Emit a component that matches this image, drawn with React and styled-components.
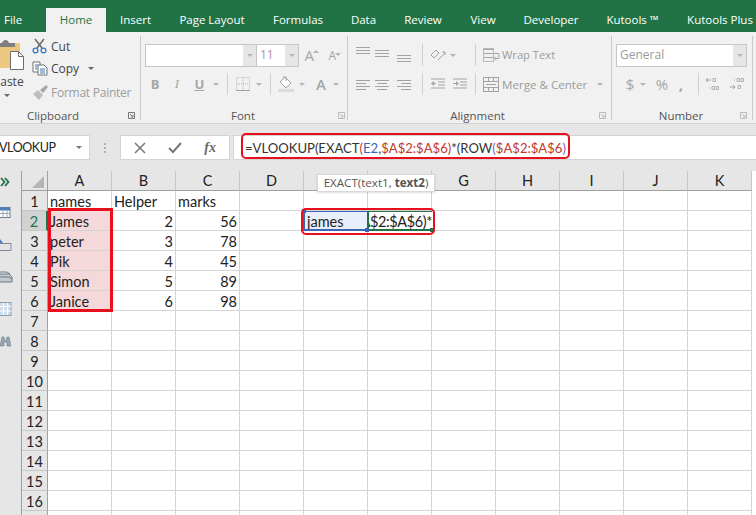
import React from 'react'
import styled, { createGlobalStyle } from 'styled-components'

const uiFont = `"Open Sans", "Noto Sans", sans-serif`
const cellFont = `Lato, "Open Sans", sans-serif`
const muted = '#a6a6a6'

const GlobalStyle = createGlobalStyle`
    html, body {
        margin: 0;
        padding: 0;
        overflow: hidden;
        background: #fff;
    }
`

const Window = styled.div`
    width: 756px;
    height: 515px;
    overflow: hidden;
    display: flex;
    flex-direction: column;
    font-family: ${uiFont};
`

const TabBar = styled.div`
    height: 32px;
    flex: none;
    background: #217346;
    display: flex;
    align-items: flex-end;
    white-space: nowrap;
`

const FileTab = styled.div`
    width: 46px;
    height: 24px;
    flex: none;
    padding-left: 4px;
    box-sizing: border-box;
    color: #fff;
    font-size: 11.5px;
    line-height: 24px;
`

const Tab = styled.div`
    height: 24px;
    width: ${p => p.$w}px;
    flex: none;
    text-align: center;
    font-size: 11.5px;
    line-height: 24px;
    color: ${p => (p.$active ? '#217346' : '#fff')};
    background: ${p => (p.$active ? '#f1f1f1' : 'transparent')};
`

const Ribbon = styled.div`
    height: 92px;
    flex: none;
    background: #f1f1f1;
    border-bottom: 1px solid #d4d4d4;
    box-sizing: border-box;
    display: flex;
    overflow: hidden;
    padding-top: 4px;
`

const Group = styled.div`
    width: ${p => p.$w}px;
    height: 84px;
    flex: none;
    box-sizing: border-box;
    border-right: 1px solid #c9c9c9;
    position: relative;
    display: flex;
    flex-direction: column;
`

const GroupBody = styled.div`
    height: 71px;
    flex: none;
    display: flex;
    flex-direction: column;
    padding-top: ${p => p.$top ?? 7}px;
    box-sizing: border-box;
`

const RibbonRow = styled.div`
    display: flex;
    align-items: center;
    height: ${p => p.$h}px;
    margin-top: ${p => p.$mt ?? 0}px;
    padding-left: ${p => p.$pl ?? 0}px;
    gap: ${p => p.$gap ?? 0}px;
    white-space: nowrap;
`

const GroupLabel = styled.div`
    height: 13px;
    text-align: center;
    font-size: 11.5px;
    line-height: 18px;
    color: #555;
    padding-right: ${p => p.$pr ?? 0}px;
`

const Launcher = styled.svg`
    position: absolute;
    right: ${p => p.$right ?? 5}px;
    bottom: 1px;
    width: 7px;
    height: 7px;
`

const Spot = styled.span`
    width: ${p => p.$w}px;
    flex: none;
    display: flex;
    align-items: center;
    justify-content: ${p => p.$justify ?? 'center'};
    font-size: ${p => p.$size ?? 12}px;
    font-weight: ${p => p.$weight ?? 400};
    font-style: ${p => (p.$italic ? 'italic' : 'normal')};
    text-decoration: ${p => (p.$under ? 'underline' : 'none')};
    margin-left: ${p => p.$ml ?? 0}px;
    color: ${p => p.$color ?? muted};
    font-family: ${p => (p.$serif ? '"Liberation Serif", serif' : uiFont)};
`

const PasteColumn = styled.div`
    width: 32px;
    height: 68px;
    flex: none;
    display: flex;
    flex-direction: column;
    align-items: flex-start;
    overflow: hidden;
`

const PasteLabel = styled.span`
    font-size: 12px;
    line-height: 16px;
    color: #444;
    margin: 4px 0 0 -7px;
`

const RibbonText = styled.span`
    font-size: ${p => p.$size ?? 12}px;
    letter-spacing: ${p => p.$track ?? 0}px;
    margin-left: ${p => p.$ml ?? 0}px;
    margin-top: ${p => p.$lift ? -p.$lift : 0}px;
    color: ${p => p.$color ?? '#444'};
`

const Caret = styled.span`
    width: 0;
    height: 0;
    flex: none;
    border-left: 3px solid transparent;
    border-right: 3px solid transparent;
    border-top: ${p => (p.$up ? '0' : `3px solid ${p.$color ?? '#b5b5b5'}`)};
    border-bottom: ${p => (p.$up ? `3px solid ${p.$color ?? '#b5b5b5'}` : '0')};
    margin-left: ${p => p.$ml ?? 0}px;
    margin-top: ${p => p.$mt ?? 0}px;
    align-self: ${p => (p.$mt ? 'flex-start' : 'center')};
`

const RibbonSep = styled.span`
    width: 1px;
    height: 22px;
    flex: none;
    background: #cfcfcf;
    margin: 0 ${p => p.$right ?? 8}px 0 ${p => p.$left ?? 8}px;
`

const ComboBox = styled.div`
    width: ${p => p.$w}px;
    height: 23px;
    flex: none;
    box-sizing: border-box;
    background: #fff;
    display: flex;
    align-items: center;
    border: 1px solid #c6c6c6;
    border-left-width: ${p => (p.$joined ? 0 : 1)}px;
    font-size: 12px;
    color: ${muted};
`

const ComboText = styled.span`
    flex: 1;
    padding: 0 0 2px 3px;
    color: ${p => p.$color ?? '#9a9a9a'};
`

const ComboArrow = styled.span`
    width: 13px;
    height: 100%;
    background: #e6e6e6;
    display: flex;
    align-items: center;
    justify-content: center;
`

const FormulaArea = styled.div`
    height: 47px;
    flex: none;
    background: #e6e6e6;
    position: relative;
    display: flex;
    padding-top: 11px;
    box-sizing: border-box;
`

const NameBox = styled.div`
    width: 90px;
    height: 25px;
    flex: none;
    box-sizing: border-box;
    background: #fff;
    border: 1px solid #d4d4d4;
    border-left: 0;
    display: flex;
    align-items: center;
    justify-content: space-between;
    padding-right: 7px;
    overflow: hidden;
    font-family: ${cellFont};
    font-size: 12.5px;
    letter-spacing: -0.4px;
    color: #222;
`

const NameText = styled.span`
    margin-left: -1px;
`

const GripDots = styled.div`
    width: 30px;
    flex: none;
    display: flex;
    flex-direction: column;
    align-items: center;
    justify-content: center;
    gap: 2px;
    height: 25px;
`

const GripDot = styled.span`
    width: 2px;
    height: 2px;
    background: #b0b0b0;
`

const FormulaButtons = styled.div`
    width: 110px;
    height: 25px;
    flex: none;
    box-sizing: border-box;
    background: #fff;
    border: 1px solid #d4d4d4;
    display: flex;
    align-items: center;
    justify-content: space-around;
    padding: 0 2px;
`

const FxLabel = styled.span`
    font-family: "Liberation Serif", serif;
    font-style: italic;
    font-weight: 700;
    font-size: 14px;
    color: #6a6a6a;
`

const FormulaInput = styled.div`
    flex: 1;
    height: 25px;
    margin-left: 3px;
    box-sizing: border-box;
    background: #fff;
    border: 1px solid #d4d4d4;
    border-right: 0;
    padding-left: 11px;
    font-family: ${cellFont};
    font-size: 13.1px;
    line-height: 24px;
    color: #333;
    white-space: nowrap;
`

const Ref = styled.span`
    color: ${p => p.$color};
`

const RedOutline = styled.div`
    position: absolute;
    left: ${p => p.$x}px;
    top: ${p => p.$y}px;
    width: ${p => p.$w}px;
    height: ${p => p.$h}px;
    box-sizing: border-box;
    border: ${p => p.$thick ?? 2}px solid #e8101c;
    border-radius: ${p => p.$radius ?? 0}px;
    pointer-events: none;
    z-index: 4;
`

const Sheet = styled.div`
    flex: 1;
    display: flex;
    position: relative;
    overflow: hidden;
    min-height: 0;
`

const SideStrip = styled.div`
    width: 22px;
    flex: none;
    box-sizing: border-box;
    background: #e6e6e6;
    border-right: 1px solid #9f9f9f;
    display: flex;
    flex-direction: column;
    align-items: flex-start;
    overflow: hidden;
`

const SideIcon = styled.div`
    height: 20px;
    margin-top: ${p => p.$mt}px;
    display: flex;
    align-items: center;
`

const Grid = styled.div`
    display: grid;
    grid-template-columns: 26px repeat(11, 64px);
    grid-auto-rows: 20px;
    font-family: ${cellFont};
    font-size: 14.5px;
    color: #222;
`

const Corner = styled.div`
    background: #e6e6e6;
    border-right: 1px solid #9f9f9f;
    border-bottom: 1px solid #9f9f9f;
    box-sizing: border-box;
    position: relative;
`

const CornerMark = styled.span`
    position: absolute;
    right: 3px;
    bottom: 2px;
    width: 0;
    height: 0;
    border-left: 12px solid transparent;
    border-bottom: 12px solid #b4b4b4;
`

const ColHead = styled.div`
    background: #e6e6e6;
    border-right: 1px solid #c8c8c8;
    border-bottom: 1px solid #9f9f9f;
    box-sizing: border-box;
    text-align: center;
    line-height: 19px;
`

const RowHead = styled.div`
    background: ${p => (p.$active ? '#d2d2d2' : '#e6e6e6')};
    color: ${p => (p.$active ? '#217346' : '#222')};
    border-right: ${p => (p.$active ? '2px solid #217346' : '1px solid #9f9f9f')};
    border-bottom: 1px solid #c8c8c8;
    box-sizing: border-box;
    text-align: center;
    line-height: 21px;
`

const Cell = styled.div`
    border-right: 1px solid #d4d4d4;
    border-bottom: 1px solid #d4d4d4;
    box-sizing: border-box;
    padding: 0 2px;
    line-height: 21px;
    white-space: nowrap;
    overflow: hidden;
    text-align: ${p => (p.$num ? 'right' : 'left')};
    background: ${p => (p.$picked ? '#f4d8da' : '#fff')};
`

const EditCell = styled.div`
    box-sizing: border-box;
    margin: 0 0 0 -1px;
    width: 65px;
    height: 20px;
    padding: 0 ${p => (p.$end ? 0 : 2)}px 0 2px;
    line-height: 20px;
    letter-spacing: ${p => (p.$end ? -0.4 : 0)}px;
    overflow: hidden;
    white-space: nowrap;
    border-top: 1px solid ${p => p.$color};
    border-bottom: 2px solid ${p => p.$color};
    border-left: 2px solid ${p => p.$color};
    background: ${p => p.$bg};
    display: flex;
    justify-content: ${p => (p.$end ? 'flex-end' : 'flex-start')};
    z-index: 1;
`

const Handle = styled.span`
    position: absolute;
    width: 4px;
    height: 4px;
    background: ${p => p.$color};
    left: ${p => p.$x}px;
    top: ${p => p.$y}px;
    z-index: 2;
`

const Tooltip = styled.div`
    position: absolute;
    left: 317px;
    top: 3px;
    width: 118px;
    height: 18px;
    box-sizing: border-box;
    background: #fff;
    border: 1px solid #d8d8d8;
    box-shadow: 0 1px 2px rgba(0, 0, 0, 0.12);
    font-size: 11.6px;
    line-height: 16px;
    text-align: center;
    color: #555;
    white-space: nowrap;
    z-index: 3;
`

function Icon({ w = 16, h = 16, children }) {
    return (
        <svg width={w} height={h} viewBox={`0 0 ${w} ${h}`} fill="none" style={{ display: 'block', flex: 'none' }}>
            {children}
        </svg>
    )
}

// horizontal text-alignment lines; each entry is [x, width]
function Lines({ rows, top = 2, gap = 3 }) {
    return (
        <Icon w={15} h={20}>
            {rows.map((r, i) => (
                <rect key={i} x={r[0]} y={top + i * gap} width={r[1]} height="1" fill="#a3a3a3" />
            ))}
        </Icon>
    )
}

const fullLines = [[0, 14], [0, 14], [0, 14]]

const PasteIcon = () => (
    <Icon w={25} h={34}>
        <rect x="-6" y="7" width="26" height="25" rx="1" fill="#ecc77f" />
        <path d="M0 7h2c1-4 6-4 7 0h6v4H0z" fill="#7f7f7f" />
        <path d="M10.500 15.500h8l5 5v13h-13z" fill="#fff" stroke="#6e6e6e" />
        <path d="M18.500 15.500v5h5" stroke="#6e6e6e" />
    </Icon>
)

const CutIcon = () => (
    <Icon w={15} h={16}>
        <path d="M3 1l7 9M12 1L5 10" stroke="#6c6c6c" strokeWidth="1.600" />
        <circle cx="3.500" cy="12.500" r="2.400" stroke="#3e78b8" strokeWidth="1.300" />
        <circle cx="11.500" cy="12.500" r="2.400" stroke="#3e78b8" strokeWidth="1.300" />
    </Icon>
)

const CopyIcon = () => (
    <Icon w={16} h={15}>
        <path d="M1 1h7v10H1z" fill="#fff" stroke="#6f6f6f" />
        <path d="M6 4h6l3 3v7H6z" fill="#fff" stroke="#6f6f6f" />
        <path d="M3 4h3M3 6h2M3 8h2M8 8h5M8 10h5M8 12h5" stroke="#3e78b8" />
    </Icon>
)

const BrushIcon = () => (
    <Icon w={17} h={16}>
        <path d="M1 10l5-4 5 5-4 5z" fill="#bdbdbd" />
        <path d="M8 6l6-5 2 2-5 6z" fill="#a8a8a8" />
    </Icon>
)

const BorderIcon = () => (
    <Icon w={14} h={14}>
        <rect x="0.500" y="0.500" width="13" height="13" stroke="#b9b9b9" strokeDasharray="1 1" />
        <path d="M7 1v12M1 7h12" stroke="#b9b9b9" strokeDasharray="1 1" />
        <path d="M0 13.500h14" stroke="#a0a0a0" />
    </Icon>
)

const FillIcon = () => (
    <Icon w={16} h={16}>
        <path d="M7 1l6 6-5 5-6-6z" stroke="#a3a3a3" fill="#fff" />
        <path d="M5 1h3v4" stroke="#a3a3a3" />
        <rect x="0" y="13" width="16" height="3" fill="#dcdcdc" />
    </Icon>
)

const OrientIcon = () => (
    <Icon w={16} h={14}>
        <path d="M1 7l5-5 3 3-5 5zM8 12l7-7M12 4h3v3" stroke="#a3a3a3" />
    </Icon>
)

const IndentIcon = ({ flip }) => (
    <Icon w={16} h={14}>
        <path d="M1 2h14M8 5h7M8 8h7M1 11h14" stroke="#a3a3a3" />
        <path d="M1 6.500h5" stroke="#a3a3a3" />
        <path d={flip ? 'M4 4v5L1 6.500z' : 'M4 4v5l3-2.500z'} fill="#a3a3a3" />
    </Icon>
)

const WrapIcon = () => (
    <Icon w={18} h={15}>
        <path d="M1 1.500h9M1 5.500h15M1 9.500h9M1 13.500h9" stroke="#a3a3a3" />
        <path d="M16 5.500v5h-4M13 8.500l-2 2 2 2" stroke="#a3a3a3" />
        <rect x="0.500" y="0.500" width="10" height="13" stroke="#b9b9b9" />
    </Icon>
)

const MergeIcon = () => (
    <Icon w={16} h={15}>
        <rect x="0.500" y="0.500" width="15" height="14" stroke="#a3a3a3" />
        <path d="M1 4.500h14M1 10.500h14M5.500 1v3M10.500 1v3M5.500 11v3M10.500 11v3M3 7.500h10" stroke="#a3a3a3" />
    </Icon>
)

const DecimalIcon = ({ flip }) => (
    <Icon w={15} h={14}>
        <path d={flip ? 'M0 10h5M3 8l2 2-2 2' : 'M0 3h5M2 1L0 3l2 2'} stroke="#a3a3a3" />
        <path d={flip ? 'M4 3h1M7 1.500h2.500v3H7zM11 1.500h2.500v3H11zM8 8.500h2.500v3H8z' : 'M7 1.500h2.500v3H7zM3 11h1M6 9.500h2.500v3H6zM10 9.500h2.500v3H10z'} stroke="#a3a3a3" strokeWidth="0.800" />
    </Icon>
)

const sideIcons = {
    chevrons: (
        <Icon w={11} h={10}>
            <path d="M1 1l3.500 4L1 9M5 1l3.500 4L5 9" stroke="#217346" strokeWidth="1.800" />
        </Icon>
    ),
    table: (
        <Icon w={11} h={12}>
            <rect x="-4" y="0.500" width="14" height="10" fill="#fff" stroke="#6d7a8a" />
            <rect x="-4" y="0.500" width="14" height="3" fill="#4a7ebb" />
            <path d="M-4 6.500h14M3 3v8M7 3v8" stroke="#9aa6b2" />
        </Icon>
    ),
    form: (
        <Icon w={12} h={13}>
            <path d="M-2 4.500h13v7H-2z" fill="#e4e4e4" stroke="#7d8a99" />
            <path d="M0 0l3 4H0z" fill="#4a7ebb" />
        </Icon>
    ),
    stack: (
        <Icon w={13} h={13}>
            <path d="M-2 3h11l3 3v5H-2z" fill="#c3c9d0" stroke="#6d7a8a" />
            <path d="M-2 6h11l3 2M-2 1h9l3 2" stroke="#6d7a8a" />
        </Icon>
    ),
    grid: (
        <Icon w={12} h={14}>
            <rect x="-2" y="0.500" width="13" height="13" fill="#cfdcea" stroke="#8fa0b2" />
            <path d="M3.500 1v12M7.500 1v12M-2 4.500h13M-2 9h13" stroke="#fff" />
        </Icon>
    ),
    binoculars: (
        <Icon w={11} h={12}>
            <path d="M0 11l2-9h2l1 4h1l1-4h2l2 9H7V7H4v4z" fill="#9aa6b2" stroke="#6f7b88" strokeWidth="0.600" />
        </Icon>
    ),
}

const launcherPath = 'M0.500 6.500V.5h6v6zM2 2l3 3M5 3v2H3'

const columns = ['A', 'B', 'C', 'D', 'E', 'F', 'G', 'H', 'I', 'J', 'K']

const rows = {
    1: { A: 'names', B: 'Helper', C: 'marks' },
    2: { A: 'James', B: 2, C: 56 },
    3: { A: 'peter', B: 3, C: 78 },
    4: { A: 'Pik', B: 4, C: 45 },
    5: { A: 'Simon', B: 5, C: 89 },
    6: { A: 'Janice', B: 6, C: 98 },
}

const rowNumbers = Array.from({ length: 17 }, (_, i) => i + 1)

function renderCell(col, row) {
    const key = col + row
    if (key === 'E2') {
        return <EditCell key={key} $color="#3a66b5" $bg="#e8eefa">james</EditCell>
    }
    if (key === 'F2') {
        return <EditCell key={key} $color="#217346" $bg="#fff" $end>A$2:$A$6)*</EditCell>
    }
    const value = rows[row] ? rows[row][col] : undefined
    return (
        <Cell key={key} $num={typeof value === 'number'} $picked={col === 'A' && row >= 2 && row <= 6}>
            {value}
        </Cell>
    )
}

function App() {
    return (
        <Window>
            <GlobalStyle />
            <TabBar>
                <FileTab>File</FileTab>
                <Tab $w={60} $active>Home</Tab>
                <Tab $w={59}>Insert</Tab>
                <Tab $w={94}>Page Layout</Tab>
                <Tab $w={78}>Formulas</Tab>
                <Tab $w={53}>Data</Tab>
                <Tab $w={66}>Review</Tab>
                <Tab $w={54}>View</Tab>
                <Tab $w={82}>Developer</Tab>
                <Tab $w={81}>Kutools ™</Tab>
                <Tab $w={94}>Kutools Plus</Tab>
            </TabBar>

            <Ribbon>
                <Group $w={141}>
                    <GroupBody $top={0}>
                        <RibbonRow $h={68}>
                            <PasteColumn>
                                <PasteIcon />
                                <PasteLabel>Paste</PasteLabel>
                                <Caret $color="#666" $ml={4} $mt={4} />
                            </PasteColumn>
                            <div>
                                <RibbonRow $h={20} $gap={4}><CutIcon /><RibbonText>Cut</RibbonText></RibbonRow>
                                <RibbonRow $h={24} $gap={3}><CopyIcon /><RibbonText>Copy</RibbonText><Caret $color="#666" $ml={6} /></RibbonRow>
                                <RibbonRow $h={24} $gap={2}><BrushIcon /><RibbonText $color="#9c9c9c" $track={-0.25}>Format Painter</RibbonText></RibbonRow>
                            </div>
                        </RibbonRow>
                    </GroupBody>
                    <GroupLabel $pr={34}>Clipboard</GroupLabel>
                    <Launcher viewBox="0 0 7 7"><path d={launcherPath} stroke="#777" fill="none" /></Launcher>
                </Group>

                <Group $w={207}>
                    <GroupBody>
                        <RibbonRow $h={24} $pl={4}>
                            <ComboBox $w={112}>
                                <ComboText />
                                <ComboArrow><Caret /></ComboArrow>
                            </ComboBox>
                            <ComboBox $w={42} $joined>
                                <ComboText $color="#b08fb0">11</ComboText>
                                <ComboArrow><Caret /></ComboArrow>
                            </ComboBox>
                            <Spot $w={20} $size={15} $justify="flex-end">A<Caret $up $mt={5} $ml={-1} /></Spot>
                            <Spot $w={22} $size={12} $justify="flex-end">A<Caret $mt={6} $ml={-1} /></Spot>
                        </RibbonRow>
                        <RibbonRow $h={24} $mt={5} $pl={6}>
                            <Spot $w={16} $weight={700} $size={13}>B</Spot>
                            <Spot $w={28} $italic $size={13} $serif>I</Spot>
                            <Spot $w={17} $under $weight={700} $size={13}>U</Spot>
                            <Caret $ml={5} />
                            <RibbonSep $left={8} $right={8} />
                            <BorderIcon />
                            <Caret $ml={6} />
                            <RibbonSep $left={8} $right={7} />
                            <FillIcon />
                            <Caret $ml={5} />
                            <Spot $w={21} $size={15} $weight={600} $justify="flex-end">A</Spot>
                            <Caret $ml={7} />
                        </RibbonRow>
                    </GroupBody>
                    <GroupLabel $pr={2}>Font</GroupLabel>
                    <Launcher $right={2} viewBox="0 0 7 7"><path d={launcherPath} stroke="#bbb" fill="none" /></Launcher>
                </Group>

                <Group $w={264}>
                    <GroupBody>
                        <RibbonRow $h={24} $pl={8}>
                            <Lines rows={fullLines} top={2} />
                            <Spot $w={22}><Lines rows={fullLines} top={5} /></Spot>
                            <Spot $w={22}><Lines rows={fullLines} top={10} /></Spot>
                            <RibbonSep $left={7} $right={7} />
                            <OrientIcon />
                            <Caret $ml={4} />
                            <RibbonSep $left={19} $right={7} />
                            <WrapIcon />
                            <RibbonText $color="#9c9c9c" $size={11.2} $ml={1} $lift={2}>Wrap Text</RibbonText>
                        </RibbonRow>
                        <RibbonRow $h={24} $mt={5} $pl={8}>
                            <Lines rows={[[0, 14], [0, 10], [0, 14], [0, 10]]} top={6} />
                            <Spot $w={22}><Lines rows={[[0, 14], [2, 10], [0, 14], [2, 10]]} top={6} /></Spot>
                            <Spot $w={22}><Lines rows={[[0, 14], [4, 10], [0, 14], [4, 10]]} top={6} /></Spot>
                            <RibbonSep $left={7} $right={7} />
                            <IndentIcon flip />
                            <Spot $w={28}><IndentIcon /></Spot>
                            <RibbonSep $left={1} $right={7} />
                            <MergeIcon />
                            <RibbonText $color="#9c9c9c" $size={11.6} $ml={3}>Merge &amp; Center</RibbonText>
                            <Caret $ml={10} />
                        </RibbonRow>
                    </GroupBody>
                    <GroupLabel $pr={4}>Alignment</GroupLabel>
                    <Launcher viewBox="0 0 7 7"><path d={launcherPath} stroke="#bbb" fill="none" /></Launcher>
                </Group>

                <Group $w={141}>
                    <GroupBody>
                        <RibbonRow $h={24} $pl={4}>
                            <ComboBox $w={131}>
                                <ComboText>General</ComboText>
                                <ComboArrow><Caret /></ComboArrow>
                            </ComboBox>
                        </RibbonRow>
                        <RibbonRow $h={24} $mt={5} $pl={12}>
                            <Spot $w={12} $size={15}>$</Spot>
                            <Caret $ml={4} />
                            <Spot $w={14} $size={15} $ml={9}>%</Spot>
                            <Spot $w={24} $size={15} $weight={700}>,</Spot>
                            <RibbonSep $left={5} $right={7} />
                            <DecimalIcon />
                            <Spot $w={32}><DecimalIcon flip /></Spot>
                        </RibbonRow>
                    </GroupBody>
                    <GroupLabel $pr={2}>Number</GroupLabel>
                    <Launcher viewBox="0 0 7 7"><path d={launcherPath} stroke="#bbb" fill="none" /></Launcher>
                </Group>
            </Ribbon>

            <FormulaArea>
                <NameBox>
                    <NameText>VLOOKUP</NameText>
                    <Caret $color="#777" />
                </NameBox>
                <GripDots>
                    <GripDot /><GripDot /><GripDot />
                </GripDots>
                <FormulaButtons>
                    <Icon w={12} h={12}><path d="M1 1l10 10M11 1L1 11" stroke="#777" strokeWidth="1.500" /></Icon>
                    <Icon w={14} h={12}><path d="M1 6l4 4 8-9" stroke="#777" strokeWidth="2" /></Icon>
                    <FxLabel>fx</FxLabel>
                </FormulaButtons>
                <FormulaInput>
                    =VLOOKUP(EXACT<Ref $color="#c0392b">(</Ref><Ref $color="#3a66b5">E2</Ref>,<Ref $color="#c0392b">$A$2:$A$6)</Ref>*(ROW<Ref $color="#8a5fb0">(</Ref><Ref $color="#c0392b">$A$2:$A$6</Ref><Ref $color="#8a5fb0">)</Ref>
                </FormulaInput>
                <RedOutline $x={241} $y={9} $w={329} $h={26} $radius={5} />
            </FormulaArea>

            <Sheet>
                <SideStrip>
                    <SideIcon $mt={1}>{sideIcons.chevrons}</SideIcon>
                    <SideIcon $mt={11}>{sideIcons.table}</SideIcon>
                    <SideIcon $mt={12}>{sideIcons.form}</SideIcon>
                    <SideIcon $mt={12}>{sideIcons.stack}</SideIcon>
                    <SideIcon $mt={12}>{sideIcons.grid}</SideIcon>
                    <SideIcon $mt={12}>{sideIcons.binoculars}</SideIcon>
                </SideStrip>
                <Grid>
                    <Corner><CornerMark /></Corner>
                    {columns.map(c => <ColHead key={c}>{c}</ColHead>)}
                    {rowNumbers.map(r => (
                        <React.Fragment key={r}>
                            <RowHead $active={r === 2}>{r <= 16 ? r : ''}</RowHead>
                            {columns.map(c => renderCell(c, r))}
                        </React.Fragment>
                    ))}
                </Grid>
                <Tooltip>EXACT(text1, <b>text2</b>)</Tooltip>
                <Handle $color="#3a66b5" $x={302} $y={38} />
                <Handle $color="#3a66b5" $x={365} $y={57} />
                <Handle $color="#217346" $x={430} $y={57} />
                <RedOutline $x={48} $y={37} $w={65} $h={104} $thick={3} />
                <RedOutline $x={301} $y={37} $w={134} $h={27} $radius={5} />
            </Sheet>
        </Window>
    )
}

export default App
